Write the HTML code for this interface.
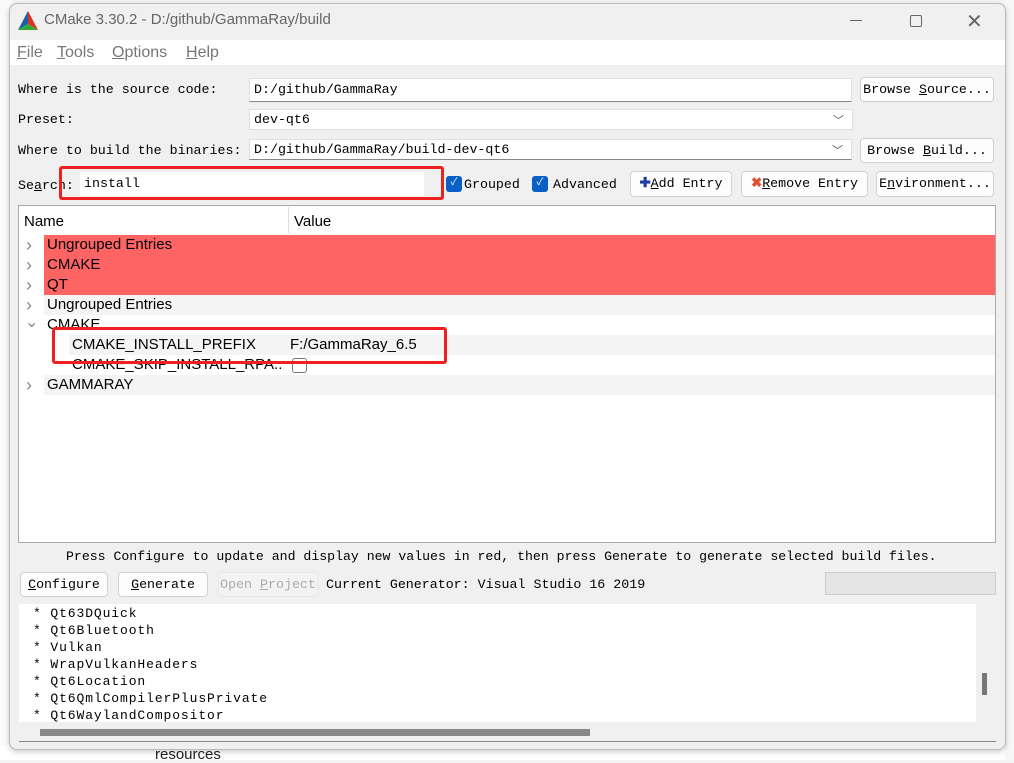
<!DOCTYPE html>
<html><head><meta charset="utf-8"><style>
*{box-sizing:border-box;margin:0;padding:0}
body{width:1014px;height:760px;position:relative;overflow:hidden;background:#f3f3f3;font-family:"Liberation Sans",sans-serif}
.a{position:absolute}
.mono{font-family:"Liberation Mono","Noto Sans CJK SC",monospace;font-size:13.3px;color:#000;white-space:pre}
.btn{position:absolute;background:#fdfdfd;border:1px solid #d0d0d0;border-radius:4px;font-family:"Liberation Mono",monospace;font-size:13.3px;white-space:pre;text-align:center;line-height:24px}
.field{position:absolute;background:#fff;border:1px solid #e0e0e0;border-bottom:1px solid #888;font-family:"Liberation Mono",monospace;font-size:13.3px;padding-left:4px;line-height:22px;white-space:pre}
.chev{position:absolute;right:8px;top:3px;font-size:11px;color:#555}
.row{position:absolute;left:44px;width:951px;height:20px;font-size:15px;line-height:20px;padding-left:3px;color:#000}
.arr{position:absolute;left:26px;font-size:18px;color:#888;line-height:20px}
.cb{position:absolute;top:0;width:16px;height:16px;background:#0a5fc4;border-radius:3px;color:#fff;font-size:10px;line-height:16px;text-align:center}
.log{font-family:"Liberation Mono",monospace;font-size:13px;line-height:17px;white-space:pre;color:#000}
</style></head><body>
<div class="a" style="left:0;top:0;width:12px;height:760px;background:#fafafa"></div>
<div class="a" style="left:0;top:745px;width:1014px;height:15px;background:#fff"></div>
<div class="a" style="left:155px;top:746px;font-size:15px;color:#222">resources</div>
<div class="a" style="left:1005px;top:0;width:9px;height:760px;background:#f7f7f7"></div>
<div class="a" style="left:9px;top:3px;width:997px;height:747px;background:#f0f0f0;border:1px solid #bbb;border-radius:8px;box-shadow:0 2px 6px rgba(0,0,0,.2)"></div>
<svg class="a" style="left:17px;top:10px" width="22" height="22" viewBox="0 0 22 22"><polygon points="11,1 1,20 11,14" fill="#1f5fa8"/><polygon points="11,1 21,20 11,14" fill="#d32"/><polygon points="1,20 21,20 11,14" fill="#3a3"/></svg>
<div class="a" style="left:44px;top:11px;font-size:15px;color:#666">CMake 3.30.2 - D:/github/GammaRay/build</div>
<div class="a" style="left:850px;top:20px;width:12px;height:1px;background:#666"></div>
<div class="a" style="left:910px;top:15px;width:12px;height:12px;border:1px solid #666;border-radius:2px"></div>
<div class="a" style="left:966px;top:9px;font-size:20px;color:#666">✕</div>
<div class="a" style="left:10px;top:40px;width:995px;height:25px;background:#fff"></div>
<div class="a" style="left:17px;top:44px;font-size:16px;color:#777"><u>F</u>ile</div>
<div class="a" style="left:57px;top:44px;font-size:16px;color:#777"><u>T</u>ools</div>
<div class="a" style="left:112px;top:44px;font-size:16px;color:#777"><u>O</u>ptions</div>
<div class="a" style="left:186px;top:44px;font-size:16px;color:#777"><u>H</u>elp</div>
<div class="a mono" style="left:18px;top:82px">Where is the source code:</div>
<div class="field" style="left:249px;top:78px;width:603px;height:24px">D:/github/GammaRay</div>
<div class="btn" style="left:860px;top:77px;width:134px;height:25px">Browse <u>S</u>ource...</div>
<div class="a mono" style="left:18px;top:112px">Preset:</div>
<div class="field" style="left:249px;top:109px;width:604px;height:21px;line-height:19px;border-bottom:1px solid #ddd">dev-qt6<span class="chev">﹀</span></div>
<div class="a mono" style="left:18px;top:143px">Where to build the binaries:</div>
<div class="field" style="left:249px;top:139px;width:603px;height:21px;line-height:19px">D:/github/GammaRay/build-dev-qt6<span class="chev">﹀</span></div>
<div class="btn" style="left:860px;top:138px;width:134px;height:25px">Browse <u>B</u>uild...</div>
<div class="a mono" style="left:18px;top:178px">Se<u>a</u>rch:</div>
<div class="field" style="left:80px;top:172px;width:344px;height:24px;border:none;line-height:24px">install</div>
<div class="a" style="left:59px;top:166px;width:385px;height:34px;border:3px solid #f02020;border-radius:3px"></div>
<div class="a mono" style="left:446px;top:176px;height:18px"><span class="cb" style="left:0">✓</span><span style="position:absolute;left:18px;top:1px">Grouped</span></div>
<div class="a mono" style="left:532px;top:176px;height:18px"><span class="cb" style="left:0">✓</span><span style="position:absolute;left:21px;top:1px">Advanced</span></div>
<div class="btn" style="left:630px;top:171px;width:102px;height:26px"><span style="color:#2040a0;font-weight:bold">✚</span><u>A</u>dd Entry</div>
<div class="btn" style="left:741px;top:171px;width:127px;height:26px"><span style="color:#e05030;font-weight:bold">✖</span><u>R</u>emove Entry</div>
<div class="btn" style="left:876px;top:171px;width:118px;height:26px">E<u>n</u>vironment...</div>
<div class="a" style="left:18px;top:205px;width:978px;height:338px;background:#fff;border:1px solid #aaa"></div>
<div class="a" style="left:24px;top:213px;font-size:15px">Name</div>
<div class="a" style="left:288px;top:207px;width:1px;height:26px;background:#ddd"></div>
<div class="a" style="left:294px;top:213px;font-size:15px">Value</div>
<div class="row" style="top:235px;background:#ff6464">Ungrouped Entries</div><div class="arr" style="top:235px">›</div>
<div class="row" style="top:255px;background:#ff6464">CMAKE</div><div class="arr" style="top:255px">›</div>
<div class="row" style="top:275px;background:#ff6464">QT</div><div class="arr" style="top:275px">›</div>
<div class="row" style="top:295px;background:#f4f4f4">Ungrouped Entries</div><div class="arr" style="top:295px">›</div>
<div class="row" style="top:315px">CMAKE</div><div class="arr" style="top:313px;left:25px;font-size:16px">⌄</div>
<div class="row" style="top:335px;left:69px;width:926px;background:#f4f4f4">CMAKE_INSTALL_PREFIX<span style="position:absolute;left:221px">F:/GammaRay_6.5</span></div>
<div class="row" style="top:355px;left:69px;width:926px"><span style="display:inline-block;width:210px;overflow:hidden;white-space:nowrap">CMAKE_SKIP_INSTALL_RPA...</span><span style="position:absolute;left:223px;top:3px;width:15px;height:15px;border:1px solid #777;border-radius:3px"></span></div>
<div class="row" style="top:375px;background:#f4f4f4">GAMMARAY</div><div class="arr" style="top:375px">›</div>
<div class="a" style="left:52px;top:327px;width:395px;height:37px;border:3px solid #f02020;border-radius:3px"></div>
<div class="a mono" style="left:66px;top:549px;font-size:13.2px">Press Configure to update and display new values in red, then press Generate to generate selected build files.</div>
<div class="btn" style="left:20px;top:572px;width:88px;height:25px"><u>C</u>onfigure</div>
<div class="btn" style="left:118px;top:572px;width:90px;height:25px"><u>G</u>enerate</div>
<div class="btn" style="left:218px;top:572px;width:100px;height:25px;color:#aaa;background:#f3f3f3;border-color:#e8e8e8">Open <u>P</u>roject</div>
<div class="a mono" style="left:326px;top:577px">Current Generator: Visual Studio 16 2019</div>
<div class="a" style="left:825px;top:572px;width:171px;height:23px;background:#e4e4e4;border:1px solid #ccc"></div>
<div class="a" style="left:19px;top:604px;width:957px;height:118px;background:#fff"></div>
<div class="a log" style="left:33px;top:605px;letter-spacing:0.9px">* Qt63DQuick
* Qt6Bluetooth
* Vulkan
* WrapVulkanHeaders
* Qt6Location
* Qt6QmlCompilerPlusPrivate
* Qt6WaylandCompositor</div>
<div class="a" style="left:982px;top:673px;width:5px;height:22px;background:#777"></div>
<div class="a" style="left:40px;top:729px;width:550px;height:7px;background:#888"></div>
<div class="a" style="left:19px;top:741px;width:977px;height:1px;background:#888"></div>
</body></html>
